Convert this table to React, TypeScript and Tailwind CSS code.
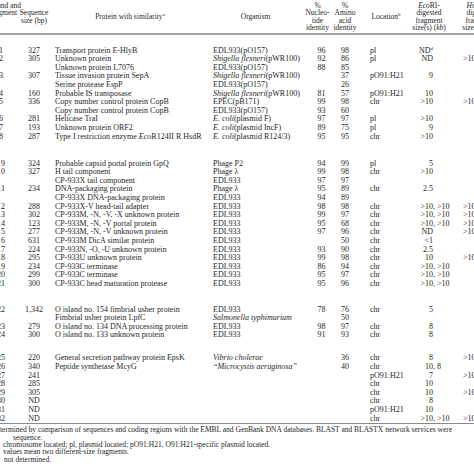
import React from "react";

const cols = "grid grid-cols-[24px_40px_159px_91px_27px_28px_47px_46px_54px]";

type Row = {
  n?: string;
  bp?: string;
  p?: React.ReactNode;
  o?: React.ReactNode;
  nt?: string;
  aa?: string;
  loc?: string;
  e1?: React.ReactNode;
  e2?: string;
  h?: string;
  g1?: boolean;
};

const I = ({ children }: { children: React.ReactNode }) => <i>{children}</i>;
const Sup = ({ children }: { children: React.ReactNode }) => (
  <span className="relative top-[-3px] text-[5px] leading-none">{children}</span>
);

const EDL = "EDL933";
const Shig = (
  <>
    <I>Shigella flexneri</I>(pWR100)
  </>
);

const group1: Row[] = [
  { n: "1", bp: "327", p: "Transport protein E-HlyB", o: "EDL933(pO157)", nt: "96", aa: "98", loc: "pl", e1: <>ND<Sup>d</Sup></> },
  { n: "2", bp: "305", p: "Unknown protein", o: Shig, nt: "92", aa: "86", loc: "pl", e1: "ND", h: ">10" },
  { p: "Unknown protein L7076", o: "EDL933(pO157)", nt: "88", aa: "85" },
  { n: "3", bp: "307", p: "Tissue invasion protein SepA", o: Shig, aa: "37", loc: "pO91:H21", e1: "9" },
  { p: "Serine protease EspP", o: "EDL933(pO157)", aa: "26" },
  { n: "4", bp: "160", p: "Probable IS transposase", o: Shig, nt: "81", aa: "57", loc: "pO91:H21", e1: "10" },
  { n: "5", bp: "336", p: "Copy number control protein CopB", o: "EPEC(pB171)", nt: "99", aa: "98", loc: "chr", e1: ">10", h: ">10" },
  { p: "Copy number control protein CopB", o: "EDL933(pO157)", nt: "93", aa: "60" },
  { n: "6", bp: "281", p: "Helicase TraI", o: <><I>E. coli</I>(plasmid F)</>, nt: "97", aa: "97", loc: "pl", e1: ">10" },
  { n: "7", bp: "193", p: "Unknown protein ORF2", o: <><I>E. coli</I>(plasmid IncF)</>, nt: "89", aa: "75", loc: "pl", e1: "9" },
  {
    n: "8",
    bp: "287",
    p: <>Type I restriction enzyme <I>Eco</I>R124II R HsdR</>,
    o: <><I>E. coli</I>(plasmid R124/3)</>,
    nt: "95",
    aa: "95",
    loc: "chr",
    e1: ">10",
  },
].map((r) => ({ ...r, g1: true }));

const group2: Row[] = [
  { n: "9", bp: "324", p: "Probable capsid portal protein GpQ", o: "Phage P2", nt: "94", aa: "99", loc: "pl", e1: "5" },
  { n: "10", bp: "327", p: "H tail component", o: "Phage λ", nt: "99", aa: "98", loc: "chr", e1: ">10" },
  { p: "CP-933X tail component", o: EDL, nt: "97", aa: "97" },
  { n: "11", bp: "234", p: "DNA-packaging protein", o: "Phage λ", nt: "95", aa: "89", loc: "chr", e1: "2.5" },
  { p: "CP-933X DNA-packaging protein", o: EDL, nt: "94", aa: "89" },
  { n: "12", bp: "288", p: "CP-933X-V head-tail adapter", o: EDL, nt: "98", aa: "98", loc: "chr", e1: ">10", e2: ", >10", h: ">10" },
  { n: "13", bp: "302", p: "CP-933M, -N, -V, -X unknown protein", o: EDL, nt: "99", aa: "97", loc: "chr", e1: ">10", e2: ", >10", h: ">10" },
  { n: "14", bp: "123", p: "CP-933M, -N, -V portal protein", o: EDL, nt: "95", aa: "68", loc: "chr", e1: ">10", e2: ", >10", h: ">10" },
  { n: "15", bp: "277", p: "CP-933M, -N, -V unknown protein", o: EDL, nt: "97", aa: "96", loc: "chr", e1: "ND", h: ">10" },
  { n: "16", bp: "631", p: "CP-933M DicA similar protein", o: EDL, aa: "50", loc: "chr", e1: "<1" },
  { n: "17", bp: "224", p: "CP-933N, -O, -U unknown protein", o: EDL, nt: "93", aa: "90", loc: "chr", e1: "2.5" },
  { n: "18", bp: "295", p: "CP-933U unknown protein", o: EDL, nt: "99", aa: "98", loc: "chr", e1: "10", h: ">10" },
  { n: "19", bp: "234", p: "CP-933C terminase", o: EDL, nt: "86", aa: "94", loc: "chr", e1: ">10", e2: ", >10" },
  { n: "20", bp: "299", p: "CP-933C terminase", o: EDL, nt: "95", aa: "97", loc: "chr", e1: ">10", e2: ", >10" },
  { n: "21", bp: "300", p: "CP-933C head maturation protease", o: EDL, nt: "95", aa: "96", loc: "chr", e1: ">10", e2: ", >10" },
];

const group3: Row[] = [
  { n: "22", bp: "1,342", p: "O island no. 154 fimbrial usher protein", o: EDL, nt: "78", aa: "76", loc: "chr", e1: "5" },
  { p: "Fimbrial usher protein LpfC", o: <I>Salmonella typhimurium</I>, aa: "50" },
  { n: "23", bp: "279", p: "O island no. 134 DNA processing protein", o: EDL, nt: "98", aa: "97", loc: "chr", e1: "8" },
  { n: "24", bp: "300", p: "O island no. 133 unknown protein", o: EDL, nt: "91", aa: "93", loc: "chr", e1: "8" },
];

const group4: Row[] = [
  { n: "25", bp: "220", p: "General secretion pathway protein EpsK", o: <I>Vibrio cholerae</I>, aa: "36", loc: "chr", e1: "8", h: ">10" },
  { n: "26", bp: "340", p: "Peptide synthetase McyG", o: <I>“Microcystis aeruginosa”</I>, aa: "40", loc: "chr", e1: "10", e2: ", 8" },
  { n: "27", bp: "241", loc: "pO91:H21", e1: "7", h: ">10" },
  { n: "28", bp: "285", loc: "chr", e1: "10" },
  { n: "29", bp: "305", loc: "chr", e1: "10", h: ">10" },
  { n: "30", bp: "ND", loc: "chr", e1: "8" },
  { n: "31", bp: "ND", loc: "pO91:H21", e1: "10" },
  { n: "32", bp: "ND", loc: "chr", e1: ">10", e2: ", >10", h: ">10" },
];

const TableRow = ({ r }: { r: Row }) => (
  <div className={`${cols} h-[8.6px] leading-[8.6px] whitespace-nowrap`}>
    <div className={r.g1 ? "text-right pr-[11px]" : "text-right pr-[9px]"}>{r.n}</div>
    <div className="text-center">{r.bp}</div>
    <div className="pl-[1px]">{r.p}</div>
    <div>{r.o}</div>
    <div className="text-center pl-[8px]">{r.nt}</div>
    <div className="text-center">{r.aa}</div>
    <div className="pl-[11px]">{r.loc}</div>
    <div className="flex">
      <span className="w-[27px] shrink-0 text-right">{r.e1}</span>
      <span>{r.e2}</span>
    </div>
    <div className="pl-[11px]">{r.h}</div>
  </div>
);

const Group = ({ rows }: { rows: Row[] }) => (
  <div className="flex flex-col">
    {rows.map((r, i) => (
      <TableRow key={i} r={r} />
    ))}
  </div>
);

export default function App() {
  return (
    <div className="w-[474px] h-[474px] overflow-hidden bg-white font-['Liberation_Serif','Times_New_Roman',serif] text-[8px] text-[#262626]">
      <div className="ml-[-10px] w-[516px]">
        {/* header */}
        <div className={`${cols} h-[33px] items-center text-[7.5px] leading-[7.5px] whitespace-nowrap`}>
          <div className="self-start pt-[1.5px] text-right pr-[8px] flex flex-col">
            <span>Island and</span>
            <span>fragment</span>
          </div>
          <div className="text-center flex flex-col">
            <span>Sequence</span>
            <span>size (bp)</span>
          </div>
          <div className="text-center pr-[7px]">
            Protein with similarity<Sup>a</Sup>
          </div>
          <div className="text-center pr-[6px]">Organism</div>
          <div className="text-center flex flex-col">
            <span>%</span>
            <span>Nucleo-</span>
            <span>tide</span>
            <span>identity</span>
          </div>
          <div className="text-center flex flex-col">
            <span>%</span>
            <span>Amino</span>
            <span>acid</span>
            <span>identity</span>
          </div>
          <div className="text-center pl-[7px]">
            Location<Sup>b</Sup>
          </div>
          <div className="text-center flex flex-col">
            <span>
              <I>Eco</I>RI-
            </span>
            <span>digested</span>
            <span>fragment</span>
            <span>
              size(s) (<I>kb</I>)
            </span>
          </div>
          <div className="text-center flex flex-col">
            <span>
              <I>Hin</I>dIII-
            </span>
            <span>digested</span>
            <span>fragment</span>
            <span>
              size(s) (<I>kb</I>)
            </span>
          </div>
        </div>
        <div className="h-[2px] bg-[#a3a3a3]" />

        {/* body */}
        <div className="pt-[11.7px] flex flex-col">
          <Group rows={group1} />
          <div className="h-[18.4px]" />
          <Group rows={group2} />
          <div className="h-[17px]" />
          <Group rows={group3} />
          <div className="h-[14.6px]" />
          <Group rows={group4} />
        </div>
        <div className="h-px bg-[#8a8a8a]" />

        {/* footnotes */}
        <div className="pt-[2px] text-[7.5px] leading-[7.4px] whitespace-nowrap flex flex-col">
          <div className="pl-[10px]">
            termined by comparison of sequences and coding regions with the EMBL and GenBank DNA databases. BLAST and BLASTX network services were
          </div>
          <div className="pl-[23px]">sequence.</div>
          <div className="pl-[13px]">chromosome located; pl, plasmid located; pO91:H21, O91:H21-specific plasmid located.</div>
          <div className="pl-[13px]">values mean two different-size fragments.</div>
          <div className="pl-[14px]">not determined.</div>
        </div>
      </div>
    </div>
  );
}
